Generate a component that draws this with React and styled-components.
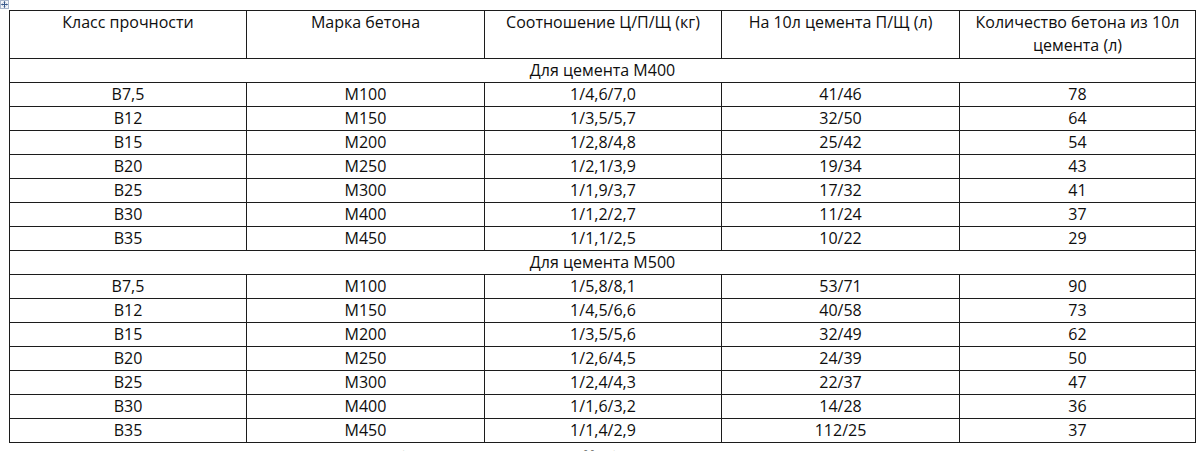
import React from 'react';
import styled, { createGlobalStyle } from 'styled-components';

const GlobalStyle = createGlobalStyle`
  html, body {
    margin: 0;
    padding: 0;
    background: #ffffff;
    overflow: hidden;
  }
  body {
    font-family: "Open Sans", "Noto Sans", sans-serif;
    color: #0e0e0e;
  }
`

const Page = styled.div`
  position: relative;
  height: 451px;
  padding: 10px 5px 0 9px;
  box-sizing: border-box;
`

const MoveHandle = styled.svg`
  position: absolute;
  top: 0;
  left: 0;
`

const Table = styled.table`
  width: 1186px;
  border-collapse: collapse;
  table-layout: fixed;
  font-size: 16px;
  line-height: 23px;
`

const Cell = styled.td`
  border: 1px solid #1c1c1c;
  padding: 0 6px;
  text-align: center;
  vertical-align: ${props => props.top ? 'top' : 'middle'};
  height: ${props => props.tall ? '47px' : '23px'};
  white-space: nowrap;
  overflow: hidden;
`

const HeadCell = styled(Cell)`
  white-space: normal;
`

const Caption = styled.p`
  margin: 2px 0 0;
  padding-left: 60px;
  text-align: center;
  font-size: 20px;
  font-weight: 700;
  letter-spacing: 1px;
`

const headers = [
  'Класс прочности',
  'Марка бетона',
  'Соотношение Ц/П/Щ (кг)',
  'На 10л цемента П/Щ (л)',
  'Количество бетона из 10л цемента (л)',
]

const groups = [
  {
    title: 'Для цемента М400',
    rows: [
      ['B7,5', 'M100', '1/4,6/7,0', '41/46', '78'],
      ['B12', 'M150', '1/3,5/5,7', '32/50', '64'],
      ['B15', 'M200', '1/2,8/4,8', '25/42', '54'],
      ['B20', 'M250', '1/2,1/3,9', '19/34', '43'],
      ['B25', 'M300', '1/1,9/3,7', '17/32', '41'],
      ['B30', 'M400', '1/1,2/2,7', '11/24', '37'],
      ['B35', 'M450', '1/1,1/2,5', '10/22', '29'],
    ],
  },
  {
    title: 'Для цемента М500',
    rows: [
      ['B7,5', 'M100', '1/5,8/8,1', '53/71', '90'],
      ['B12', 'M150', '1/4,5/6,6', '40/58', '73'],
      ['B15', 'M200', '1/3,5/5,6', '32/49', '62'],
      ['B20', 'M250', '1/2,6/4,5', '24/39', '50'],
      ['B25', 'M300', '1/2,4/4,3', '22/37', '47'],
      ['B30', 'M400', '1/1,6/3,2', '14/28', '36'],
      ['B35', 'M450', '1/1,4/2,9', '112/25', '37'],
    ],
  },
]

const widths = [237, 238, 237, 238, 236]

export default function App() {
  return (
    <Page>
      <GlobalStyle />
      <MoveHandle width="9" height="9" viewBox="0 0 9 9">
        <rect x="0.5" y="0.5" width="8" height="8" fill="#f4f6fa" stroke="#a9b6cc" />
        <path d="M4.5 1.5v6M1.5 4.5h6" stroke="#3a5a8c" strokeWidth="1" />
        <path d="M4.5 1.2l-1.3 1.4h2.6zM4.5 7.8l-1.3-1.4h2.6zM1.2 4.5l1.4-1.3v2.6zM7.8 4.5l-1.4-1.3v2.6z" fill="#3a5a8c" />
      </MoveHandle>
      <Table>
        <colgroup>
          {widths.map((w, i) => <col key={i} style={{ width: w }} />)}
        </colgroup>
        <tbody>
          <tr>
            {headers.map(h => (
              <HeadCell key={h} tall top>{h}</HeadCell>
            ))}
          </tr>
          {groups.map(g => (
            <React.Fragment key={g.title}>
              <tr>
                <Cell colSpan={5}>{g.title}</Cell>
              </tr>
              {g.rows.map(r => (
                <tr key={g.title + r[0]}>
                  {r.map((v, i) => <Cell key={i}>{v}</Cell>)}
                </tr>
              ))}
            </React.Fragment>
          ))}
        </tbody>
      </Table>
      <Caption>Таблица пропорций бетона для разных марок</Caption>
    </Page>
  );
}
